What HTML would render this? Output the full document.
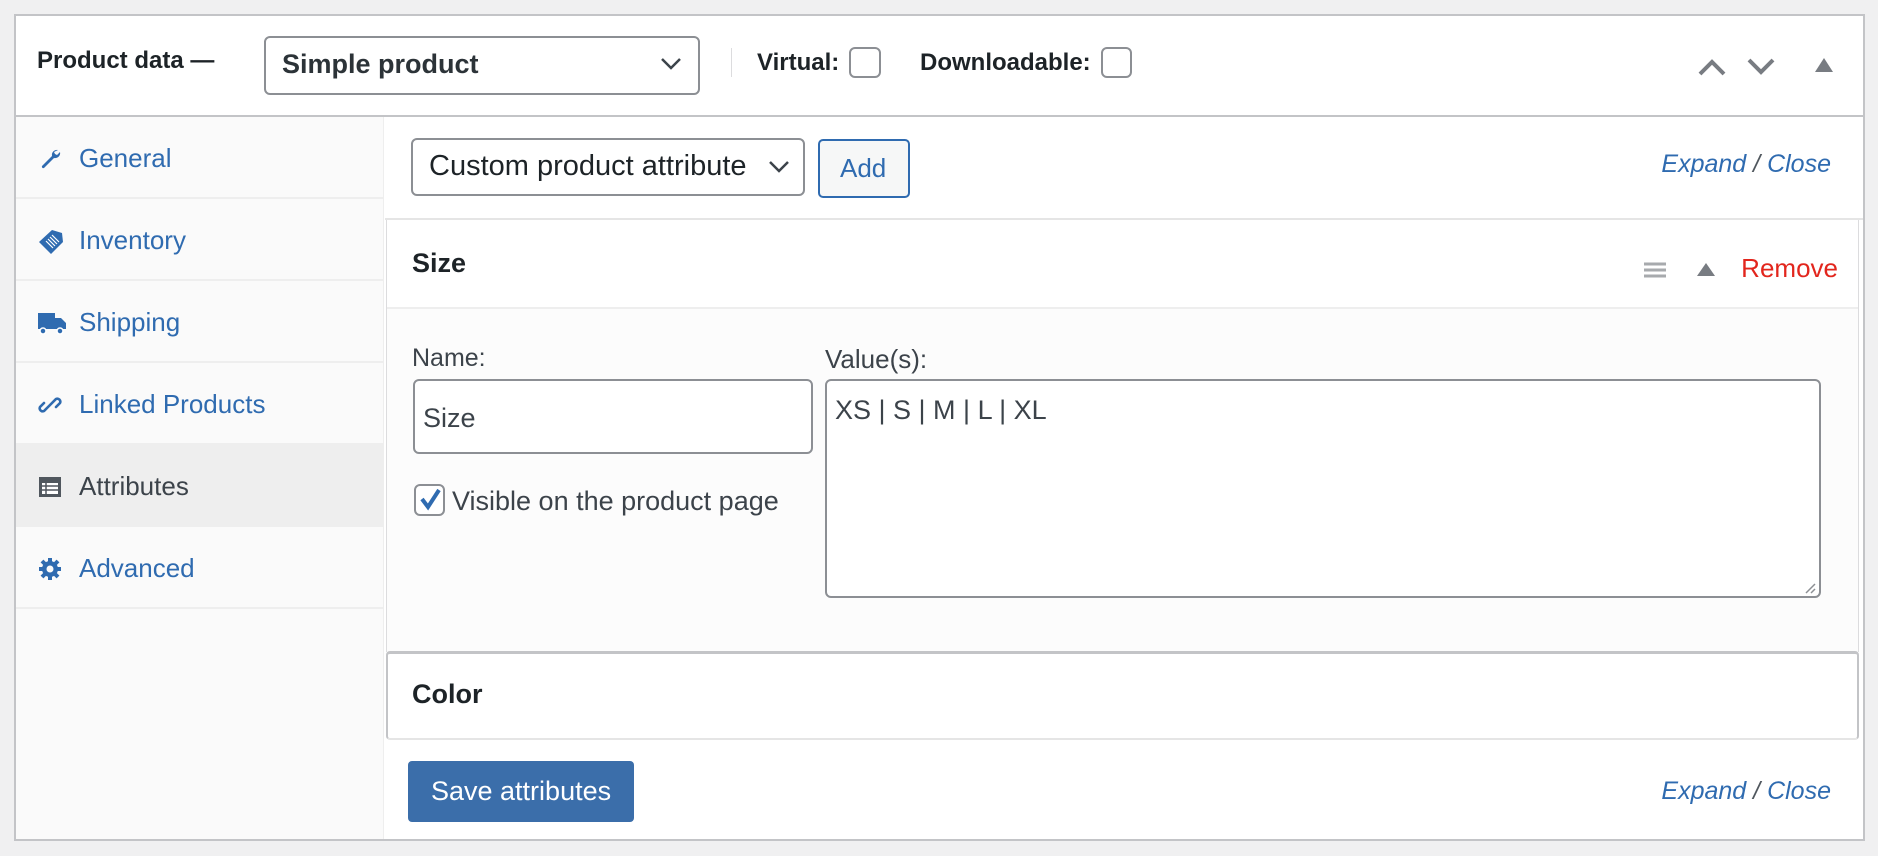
<!DOCTYPE html>
<html><head><meta charset="utf-8">
<style>
*{box-sizing:border-box;margin:0;padding:0}
body{width:1878px;height:856px;background:#f0f0f1;font-family:"Liberation Sans",Arial,sans-serif;font-size:21px;color:#3c434a;position:relative;overflow:hidden}
.abs{position:absolute}
.panel{left:14px;top:14px;width:1851px;height:827px;background:#fff;border:2px solid #c3c4c7}
.blue{color:#2f6bb0}
.sel{border:2px solid #8c8f94;border-radius:6px;background:#fff}
.cb{border:2px solid #8c8f94;border-radius:6px;background:#fff}
.item{position:absolute;left:0;width:368px;height:82px;border-bottom:2px solid #eee}
.item span{position:absolute;left:63px;top:26px;font-size:26px}
.item svg{position:absolute;left:22px;top:30px}
</style></head><body>
<div class="abs panel"></div>
<!-- header -->
<div class="abs" style="left:16px;top:115px;width:1847px;height:2px;background:#c3c4c7"></div>
<div class="abs" style="left:37px;top:47px;font-weight:bold;font-size:24px;color:#1d2327">Product data —</div>
<div class="abs sel" style="left:264px;top:36px;width:436px;height:59px"></div>
<div class="abs" style="left:282px;top:49px;font-size:27px;font-weight:bold;color:#2c3338">Simple product</div>
<svg class="abs" style="left:660px;top:57px" width="22" height="14" viewBox="0 0 22 14"><path d="M2 2l9 9 9-9" stroke="#3c434a" stroke-width="2.5" fill="none"/></svg>
<div class="abs" style="left:731px;top:48px;width:1px;height:29px;background:#dcdcde"></div>
<div class="abs" style="left:757px;top:49px;font-weight:bold;font-size:24px;color:#1d2327">Virtual:</div>
<div class="abs cb" style="left:849px;top:47px;width:32px;height:31px"></div>
<div class="abs" style="left:920px;top:49px;font-weight:bold;font-size:24px;color:#1d2327">Downloadable:</div>
<div class="abs cb" style="left:1101px;top:47px;width:31px;height:31px"></div>
<svg class="abs" style="left:1697px;top:58px" width="30" height="18" viewBox="0 0 30 18"><path d="M3 16L15 4l12 12" stroke="#787c82" stroke-width="4" fill="none"/></svg>
<svg class="abs" style="left:1746px;top:58px" width="30" height="18" viewBox="0 0 30 18"><path d="M3 2l12 12 12-12" stroke="#787c82" stroke-width="4" fill="none"/></svg>
<svg class="abs" style="left:1815px;top:58px" width="18" height="14"><path d="M9 0L18 14H0z" fill="#787c82"/></svg>
<!-- sidebar -->
<div class="abs" style="left:16px;top:117px;width:368px;height:722px;background:#fafafa;border-right:1px solid #eee">
 <div class="item" style="top:0"><svg width="24" height="24" viewBox="0 0 24 24"><path d="M20 3a5 5 0 0 0-6 6L4 19a1.5 1.5 0 0 0 2 2l10-10a5 5 0 0 0 6-6l-3 3-2-1-1-2z" fill="#2f6bb0"/></svg><span class="blue">General</span></div>
 <div class="item" style="top:82px"><svg width="26" height="26" viewBox="0 0 26 26"><path d="M14 1l10 3 1 9-12 12L1 13z" fill="#2f6bb0"/><path d="M8 12l7 7M10 10l7 7M12 8l7 7M14 6l7 7" stroke="#fff" stroke-width="1.2"/></svg><span class="blue">Inventory</span></div>
 <div class="item" style="top:164px"><svg width="28" height="24" viewBox="0 0 28 24"><path d="M0 2h17v16H0zM17 7h6l5 5v6H17z" fill="#2f6bb0"/><circle cx="5" cy="20" r="3" fill="#2f6bb0" stroke="#fff" stroke-width="1.5"/><circle cx="22" cy="20" r="3" fill="#2f6bb0" stroke="#fff" stroke-width="1.5"/></svg><span class="blue">Shipping</span></div>
 <div class="item" style="top:246px"><svg width="24" height="24" viewBox="0 0 24 24"><path d="M10 14l-4 4a3 3 0 0 1-4-4l4-4M14 10l4-4a3 3 0 0 1 4 4l-4 4M9 15l6-6" stroke="#2f6bb0" stroke-width="2.6" fill="none" stroke-linecap="round"/></svg><span class="blue">Linked Products</span></div>
 <div class="item" style="top:328px;background:#eee"><svg width="24" height="24" viewBox="0 0 24 24"><rect x="1" y="2" width="22" height="20" fill="#50575e"/><rect x="4" y="8" width="16" height="11" fill="#fff"/><path d="M4 11h16M4 15h16M8 8v11" stroke="#50575e" stroke-width="1.5"/></svg><span style="color:#3c434a">Attributes</span></div>
 <div class="item" style="top:410px"><svg width="24" height="24" viewBox="0 0 24 24"><circle cx="12" cy="12" r="8" fill="#2f6bb0"/><path d="M12 1v22M1 12h22M4 4l16 16M20 4L4 20" stroke="#2f6bb0" stroke-width="4"/><circle cx="12" cy="12" r="3.5" fill="#fafafa"/></svg><span class="blue">Advanced</span></div>
</div>
<!-- toolbar -->
<div class="abs sel" style="left:411px;top:138px;width:394px;height:58px"></div>
<div class="abs" style="left:429px;top:150px;font-size:29px;color:#1d2327">Custom product attribute</div>
<svg class="abs" style="left:768px;top:160px" width="22" height="14" viewBox="0 0 22 14"><path d="M2 2l9 9 9-9" stroke="#3c434a" stroke-width="2.5" fill="none"/></svg>
<div class="abs" style="left:818px;top:139px;width:92px;height:59px;border:2px solid #2f6bb0;border-radius:5px;background:#f6f7f7"></div>
<div class="abs blue" style="left:840px;top:153px;font-size:26px">Add</div>
<div class="abs blue" style="right:47px;top:150px;font-size:25px;font-style:italic">Expand <span style="color:#50575e">/</span> Close</div>
<div class="abs" style="left:385px;top:218px;width:1478px;height:2px;background:#e5e5e5"></div>
<!-- Size box -->
<div class="abs" style="left:386px;top:220px;width:1473px;height:432px;background:#fcfcfc;border-left:1px solid #dcdcde;border-right:1px solid #dcdcde"></div>
<div class="abs" style="left:387px;top:220px;width:1471px;height:89px;background:#fff;border-bottom:2px solid #eee"></div>
<div class="abs" style="left:412px;top:248px;font-weight:bold;font-size:27px;color:#1d2327">Size</div>
<svg class="abs" style="left:1644px;top:262px" width="22" height="16"><path d="M0 2h22M0 8h22M0 14h22" stroke="#a7aaad" stroke-width="3"/></svg>
<svg class="abs" style="left:1697px;top:263px" width="18" height="13"><path d="M9 0L18 13H0z" fill="#787c82"/></svg>
<div class="abs" style="right:40px;top:253px;font-size:26px;color:#e2261d">Remove</div>
<div class="abs" style="left:412px;top:344px;font-size:25px">Name:</div>
<div class="abs sel" style="left:413px;top:379px;width:400px;height:75px"></div>
<div class="abs" style="left:423px;top:403px;font-size:27px">Size</div>
<div class="abs cb" style="left:414px;top:484px;width:31px;height:32px"></div>
<svg class="abs" style="left:417px;top:486px" width="26" height="26" viewBox="0 0 26 26"><path d="M5 13l6 8L22 4" stroke="#2f6bb0" stroke-width="4" fill="none"/></svg>
<div class="abs" style="left:452px;top:486px;font-size:27px">Visible on the product page</div>
<div class="abs" style="left:825px;top:344px;font-size:26px">Value(s):</div>
<div class="abs sel" style="left:825px;top:379px;width:996px;height:219px"></div>
<div class="abs" style="left:835px;top:395px;font-size:27px">XS | S | M | L | XL</div>
<svg class="abs" style="left:1804px;top:582px" width="12" height="12"><path d="M11 2L2 11M11 7L7 11" stroke="#8c8f94" stroke-width="1.5"/></svg>
<!-- Color box -->
<div class="abs" style="left:386px;top:651px;width:1473px;height:89px;background:#fff;border:2px solid #c3c4c7;border-radius:4px;border-top-width:3px;border-bottom:2px solid #e5e5e5"></div>
<div class="abs" style="left:412px;top:679px;font-weight:bold;font-size:27px;color:#1d2327">Color</div>
<!-- bottom -->
<div class="abs" style="left:408px;top:761px;width:226px;height:61px;background:#3b6eaa;border-radius:4px"></div>
<div class="abs" style="left:431px;top:776px;font-size:27px;color:#fff">Save attributes</div>
<div class="abs blue" style="right:47px;top:777px;font-size:25px;font-style:italic">Expand <span style="color:#50575e">/</span> Close</div>
</body></html>
